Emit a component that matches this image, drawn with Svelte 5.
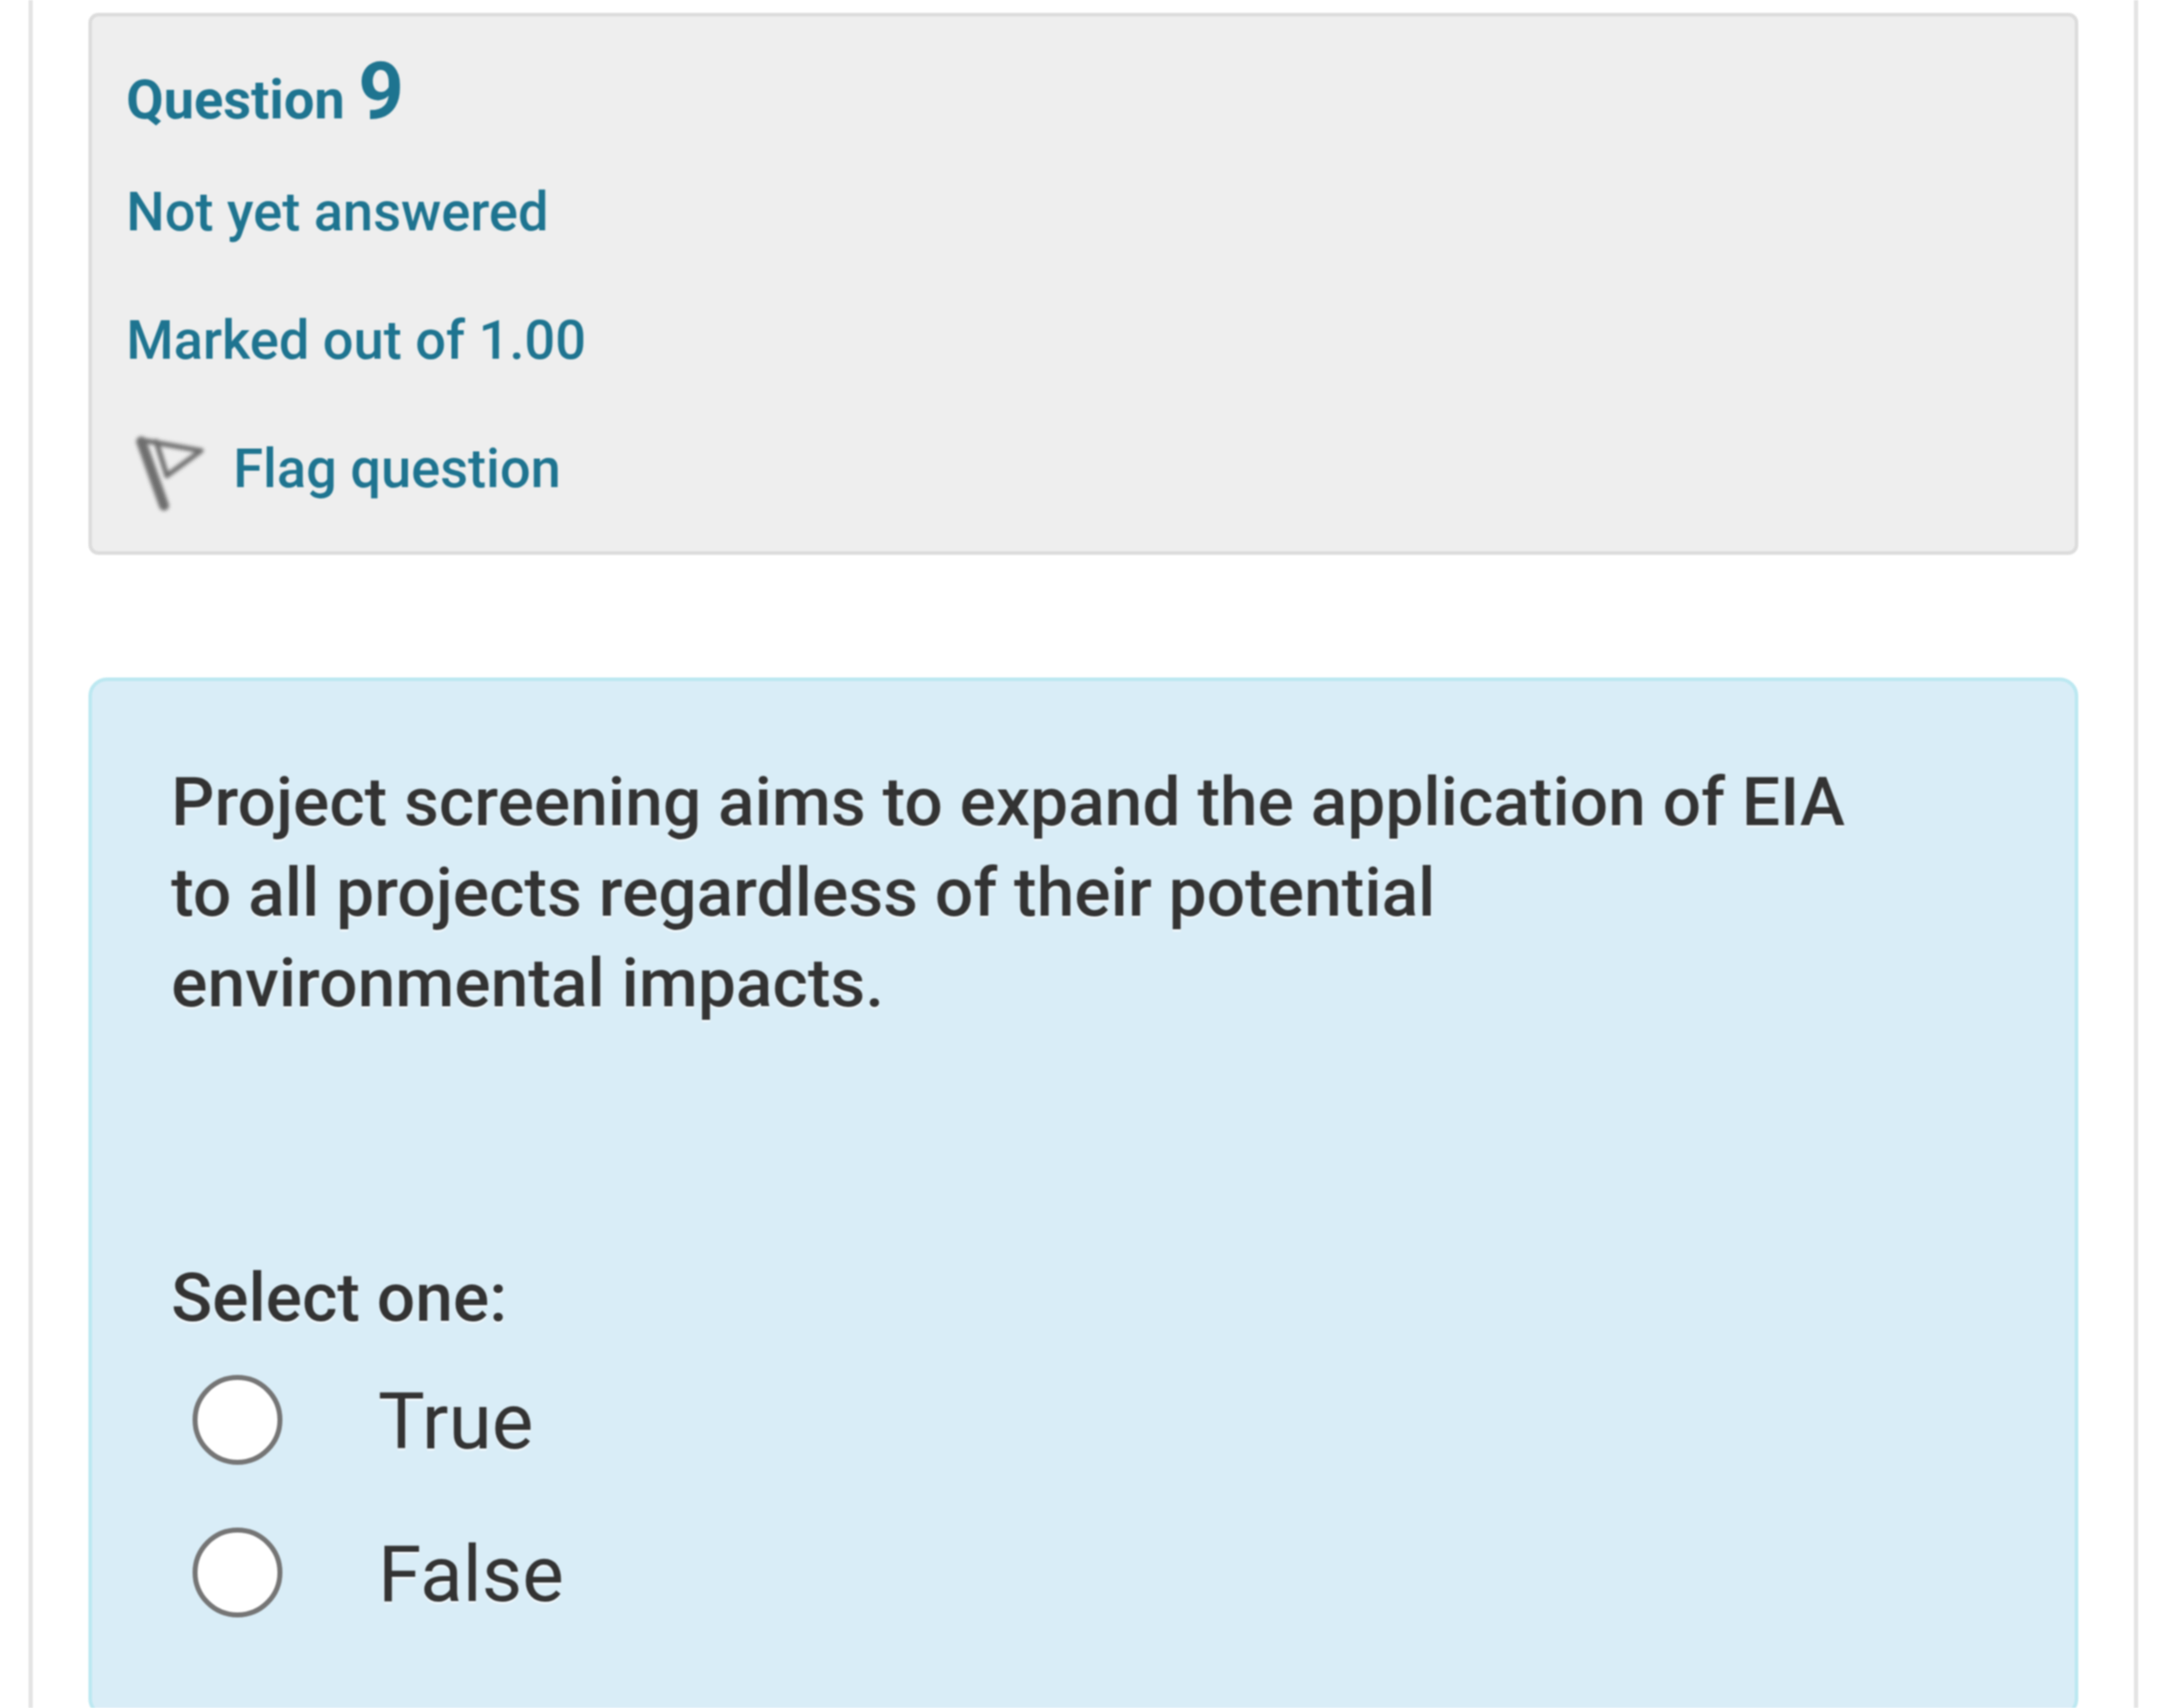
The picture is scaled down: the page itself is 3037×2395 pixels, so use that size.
<script lang="ts">
    const answers = ["True", "False"];
</script>

<div class="page">
    <div class="que">
        <div class="info">
            <h3 class="no">Question <span class="qno">9</span></h3>
            <div class="state">Not yet answered</div>
            <div class="grade">Marked out of 1.00</div>
            <div class="flag">
                <svg class="flag-icon" viewBox="0 0 100 110" width="100" height="110">
                    <g fill="none" stroke="#6f6f6f" stroke-linecap="round" stroke-linejoin="round">
                        <path d="M8 12 L40 102" stroke-width="14" />
                        <path d="M8 10 L92 25 L44 60" stroke-width="7" />
                        <path d="M29 12 L44 60" stroke-width="7" />
                    </g>
                </svg>
                <span>Flag question</span>
            </div>
        </div>

        <div class="content">
            <p class="qtext">
                Project screening aims to expand the application of EIA<br />
                to all projects regardless of their potential<br />
                environmental impacts.
            </p>
            <div class="prompt">Select one:</div>
            <div class="answers">
                {#each answers as answer}
                    <div class="answer">
                        <span class="radio"></span>
                        <span class="label">{answer}</span>
                    </div>
                {/each}
            </div>
        </div>
    </div>
</div>

<style>
    :global(body) {
        margin: 0;
        background: #fff;
        overflow: hidden;
    }

    .page {
        width: 3037px;
        height: 2395px;
        overflow: hidden;
        font-family: Roboto, "Liberation Sans", sans-serif;
        filter: blur(0.8px);
    }

    .que {
        box-sizing: border-box;
        margin-left: 40px;
        width: 2958px;
        height: 2500px;
        padding: 18px 78px 0;
        border-left: 6px solid #e4e4e4;
        border-right: 6px solid #e4e4e4;
    }

    .info {
        box-sizing: border-box;
        height: 760px;
        padding: 47px 48px 0;
        background: #eeeeee;
        border: 5px solid #dcdcdc;
        border-radius: 14px;
        color: #1e7490;
        font-size: 76px;
        font-weight: 500;
    }

    .no {
        margin: 0;
        font-size: 76px;
        font-weight: 700;
        line-height: 116px;
    }

    .qno {
        font-size: 112px;
    }

    .state {
        margin-top: 53px;
        line-height: 92px;
    }

    .grade {
        margin-top: 88px;
        line-height: 92px;
    }

    .flag {
        display: flex;
        align-items: center;
        margin-top: 88px;
        height: 92px;
    }

    .flag-icon {
        margin: 10px 37px 0 13px;
        filter: blur(2.6px);
    }

    .content {
        box-sizing: border-box;
        height: 1458px;
        margin-top: 172px;
        padding: 106px 111px 0;
        background: #d9edf7;
        border: 5px solid #bce8f1;
        border-radius: 26px;
        color: #333;
        font-size: 95px;
        font-weight: 500;
        text-shadow: 0 3px 2px rgba(255, 255, 255, 0.7);
    }

    .qtext {
        margin: 0;
        line-height: 127px;
    }

    .prompt {
        margin-top: 314px;
        line-height: 127px;
    }

    .answers {
        display: flex;
        flex-direction: column;
        gap: 88px;
        margin-top: 45px;
        padding-left: 30px;
    }

    .answer {
        display: flex;
        align-items: center;
        height: 126px;
    }

    .radio {
        box-sizing: border-box;
        width: 126px;
        height: 126px;
        background: #fff;
        border: 7px solid #757575;
        border-radius: 50%;
    }

    .label {
        margin: 4px 0 0 134px;
        font-size: 110px;
        font-weight: 400;
    }
</style>
